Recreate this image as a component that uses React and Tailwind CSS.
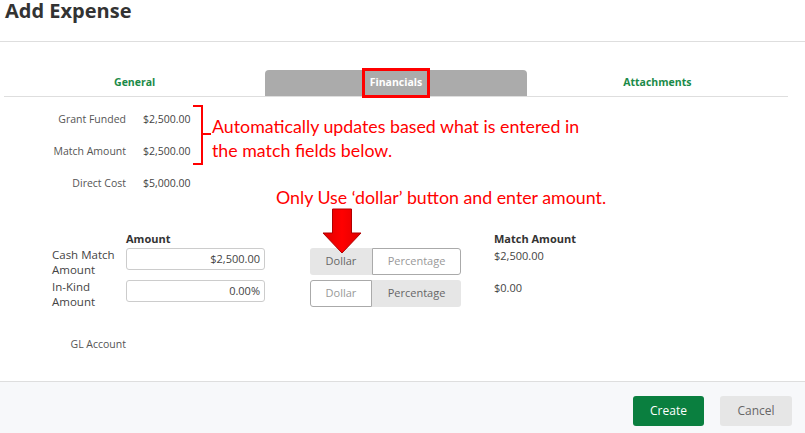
import { useState } from 'react';

const ui = { fontFamily: '"Open Sans", "Liberation Sans", sans-serif' };
const note = { fontFamily: 'Lato, "Liberation Sans", sans-serif' };

function Bracket() {
  return (
    <svg width="20" height="62" viewBox="0 0 20 62" className="shrink-0">
      <path
        d="M1 1 H10 V29 L19 29 M10 29 V59 H1"
        fill="none"
        stroke="#f00"
        strokeWidth="2"
      />
    </svg>
  );
}

function DownArrow() {
  return (
    <svg width="40" height="46" viewBox="0 0 40 46">
      <defs>
        <linearGradient id="arrowFill" x1="0" y1="0" x2="1" y2="0">
          <stop offset="0" stopColor="#e00000" />
          <stop offset="0.5" stopColor="#ff0000" />
          <stop offset="1" stopColor="#e00000" />
        </linearGradient>
      </defs>
      <path
        d="M10.5 1 H29.5 V25 H39 L20 45 L1 25 H10.5 Z"
        fill="url(#arrowFill)"
        stroke="#b00000"
        strokeWidth="1"
      />
    </svg>
  );
}

function Toggle({ active }) {
  const on = 'bg-[#e6e6e6] text-[#666]';
  const off = 'bg-white text-[#999] border border-[#aaa]';
  return (
    <div className="flex h-[27px] w-[151px] text-[11px]">
      <div
        className={
          active === 'dollar'
            ? `w-[62px] flex items-center justify-center rounded-l-[3px] ${on}`
            : `w-[62px] flex items-center justify-center rounded-l-[3px] ${off}`
        }
      >
        Dollar
      </div>
      <div
        className={
          active === 'percentage'
            ? `flex-1 flex items-center justify-center rounded-r-[3px] ${on}`
            : `flex-1 flex items-center justify-center rounded-r-[3px] ${off}`
        }
      >
        Percentage
      </div>
    </div>
  );
}

const tabs = ['General', 'Financials', 'Attachments'];

export default function App() {
  const [tab, setTab] = useState('Financials');

  return (
    <div className="relative flex flex-col h-[433px] w-[805px] bg-white overflow-hidden" style={ui}>
      {/* header */}
      <div className="h-[42px] border-b border-[#dedede] px-[5px]">
        <h1 className="text-[20px] font-bold leading-[21px] text-[#333]">Add Expense</h1>
      </div>

      {/* tabs */}
      <div className="mt-[28px] mx-[4px] w-[784px] flex border-b border-[#dedede]">
        {tabs.map((t) => (
          <button
            key={t}
            onClick={() => setTab(t)}
            className={
              tab === t
                ? 'relative flex-1 h-[26px] flex items-center justify-center rounded-t-[4px] bg-[#ababab] text-white text-[10.5px] font-bold'
                : 'relative flex-1 h-[26px] flex items-center justify-center text-[#1a8a48] text-[10.5px] font-bold'
            }
          >
            {t}
            {t === 'Financials' && (
              <span className="absolute left-1/2 -translate-x-1/2 top-[-2px] w-[68px] h-[30px] border-[3px] border-[#f00]" />
            )}
          </button>
        ))}
      </div>

      {/* summary */}
      <div className="mt-[7px] flex items-center">
        <div className="grid grid-cols-[126px_49px] gap-x-[17px] text-[10.5px]">
          <div className="h-[32px] flex items-center justify-end text-[#555]">Grant Funded</div>
          <div className="h-[32px] flex items-center text-[#444]">$2,500.00</div>
          <div className="h-[32px] flex items-center justify-end text-[#555]">Match Amount</div>
          <div className="h-[32px] flex items-center text-[#444]">$2,500.00</div>
        </div>
        <Bracket />
        <div className="text-[17.8px] leading-[24px] text-[#f00] pt-[4px]" style={note}>
          <div>Automatically updates based what is entered in</div>
          <div>the match fields below.</div>
        </div>
      </div>
      <div className="grid grid-cols-[126px_auto] gap-x-[17px] text-[10.5px]">
        <div className="h-[32px] flex items-center justify-end text-[#555]">Direct Cost</div>
        <div className="h-[32px] flex items-center text-[#444]">$5,000.00</div>
      </div>

      {/* match fields */}
      <div className="mt-[31px] grid grid-cols-[74px_139px_45px_151px_33px_auto] grid-rows-[17px_32px_32px] pl-[52px] text-[11px]">
        <div />
        <div className="font-bold text-[#333] leading-[16px]">Amount</div>
        <div />
        <div />
        <div />
        <div className="font-bold text-[#333] leading-[16px]">Match Amount</div>

        <div className="text-[#444] text-[11.5px] leading-[15px] -mt-[1px]">Cash Match<br />Amount</div>
        <div className="h-[22px] rounded-[3px] border border-[#ccc] flex items-center justify-end pr-[4px] text-[#444]">
          $2,500.00
        </div>
        <div />
        <Toggle active="dollar" />
        <div />
        <div className="text-[#444] leading-[15px]">$2,500.00</div>

        <div className="text-[#444] text-[11.5px] leading-[15px] -mt-[1px]">In-Kind<br />Amount</div>
        <div className="h-[22px] rounded-[3px] border border-[#ccc] flex items-center justify-end pr-[4px] text-[#444]">
          0.00%
        </div>
        <div />
        <Toggle active="percentage" />
        <div />
        <div className="text-[#444] leading-[15px]">$0.00</div>
      </div>

      <div className="mt-[24px] w-[126px] text-right text-[10.5px] leading-[16px] text-[#555]">GL Account</div>

      {/* footer */}
      <div className="mt-auto h-[52px] border-t border-[#dedede] bg-[#f7f8fa] flex items-start justify-end gap-[16px] pt-[14px] pr-[13px]">
        <button className="w-[71px] h-[30px] rounded-[3px] bg-[#0a7f3f] text-white text-[12px]">Create</button>
        <button className="w-[72px] h-[30px] rounded-[3px] bg-[#e6e6e6] text-[#666] text-[12px]">Cancel</button>
      </div>

      {/* annotations laid over the form */}
      <div className="absolute left-[276px] top-[185px] text-[17.8px] leading-[24px] text-[#f00] whitespace-nowrap" style={note}>
        Only Use ‘dollar’ button and enter amount.
      </div>
      <div className="absolute left-[322px] top-[208px]">
        <DownArrow />
      </div>
    </div>
  );
}
